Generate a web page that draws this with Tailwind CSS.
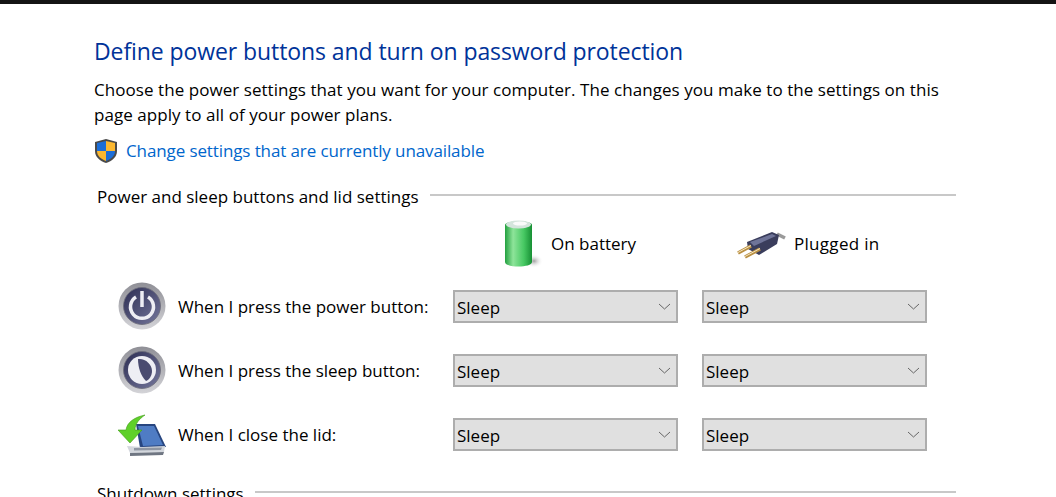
<!DOCTYPE html>
<html lang="en">
<head>
  <meta charset="UTF-8" />
  <title>Power Options</title>
  <script src="https://cdn.jsdelivr.net/npm/@tailwindcss/browser@4"></script>
</head>
<body class="h-[497px] w-[1056px] overflow-hidden bg-white font-['Open_Sans',sans-serif] text-[17px] text-black">

  <!-- top edge -->
  <div class="h-1 bg-[#141414]"></div>

  <main class="pl-[94px] pr-[100px]">
    <h1 class="mt-[30px] h-[34px] text-[23px] leading-[34px] tracking-[-0.085px] text-[#003399]">Define power buttons and turn on password protection</h1>
    <p class="mt-[9px] w-[860px] text-[17px] leading-[25px] tracking-[0.055px]">Choose the power settings that you want for your computer. The changes you make to the settings on this page apply to all of your power plans.</p>

    <a href="#" class="mt-[11px] flex h-[26px] items-center gap-[8px] tracking-[-0.11px] text-[#0066cc]">
      <svg width="24" height="26" viewBox="0 0 24 26">
        <path d="M12 1 L23 4 V13 C23 19 18 23 12 25 C6 23 1 19 1 13 V4 Z" fill="#4a4a4a"/>
        <path d="M12 3 V13 H3 V5 Z" fill="#1c6ed8"/>
        <path d="M12 3 L21 5 V13 H12 Z" fill="#fcb830"/>
        <path d="M3 13 H12 V23 C7 21 3 18 3 13 Z" fill="#fcb830"/>
        <path d="M12 13 H21 C21 18 17 21 12 23 Z" fill="#1c6ed8"/>
      </svg>
      Change settings that are currently unavailable
    </a>

    <!-- buttons and lid -->
    <section class="mt-[20px]">
      <div class="flex h-[26px] items-center gap-[11px] pl-[3px]">
        <h2 class="font-normal">Power and sleep buttons and lid settings</h2>
        <div class="mb-[4px] h-[2px] flex-1 bg-[#c8c8c8]"></div>
      </div>

      <div class="mt-[8px] grid grid-cols-[335px_225px_225px] gap-x-[24px]">
        <div></div>
        <div class="flex h-[52px] items-center">
          <svg class="ml-[47px]" width="48" height="52" viewBox="0 0 48 52">
            <defs>
              <linearGradient id="cell" x1="0" x2="1" y1="0" y2="0">
                <stop offset="0" stop-color="#23a03f"/>
                <stop offset="0.3" stop-color="#8ee49a"/>
                <stop offset="0.7" stop-color="#46c862"/>
                <stop offset="1" stop-color="#178f34"/>
              </linearGradient>
              <radialGradient id="blur"><stop offset="0" stop-color="#888" stop-opacity=".8"/><stop offset="1" stop-color="#fff" stop-opacity="0"/></radialGradient>
            </defs>
            <ellipse cx="34" cy="43" rx="9" ry="7" fill="url(#blur)"/>
            <path d="M5 7 C5 2 32 2 32 7 V44 C32 50 5 50 5 44 Z" fill="url(#cell)"/>
            <ellipse cx="18.500" cy="6.500" rx="12.500" ry="4" fill="#d4e4dc"/>
            <ellipse cx="20" cy="5.500" rx="7" ry="2" fill="#fafafa"/>
          </svg>
          <span class="ml-[3px]">On battery</span>
        </div>
        <div class="flex h-[52px] items-center">
          <svg class="ml-[35px]" width="50" height="30" viewBox="0 0 50 30">
            <path d="M40 5 L48 9" stroke="#9a9a9a" stroke-width="3.500"/>
            <path d="M10 13 L35 3 L42 6 L40 15 L22 26 L11 20 Z" fill="#3a3d5c"/>
            <path d="M13 13 L35 5 L39 7 L17 17 Z" fill="#6f7498"/>
            <path d="M1 24 L14 17" stroke="#b98f42" stroke-width="3.500"/>
            <path d="M8 28 L23 20" stroke="#b98f42" stroke-width="3.500"/>
            <path d="M1 23.500 L14 16.500" stroke="#f6e6c0" stroke-width="1"/>
            <path d="M8 27.500 L23 19.500" stroke="#f6e6c0" stroke-width="1"/>
          </svg>
          <span class="ml-[7px] tracking-[0.3px]">Plugged in</span>
        </div>
      </div>

      <div class="mt-[20px] grid grid-cols-[335px_225px_225px] gap-x-[24px] gap-y-[31px]">
        <!-- power button -->
        <div class="flex h-[33px] items-center pl-[24px]">
          <svg class="my-[-10px] mt-[-11px] shrink-0" width="48" height="48" viewBox="0 0 48 48">
            <defs>
              <linearGradient id="ring" x1="0" x2="0" y1="0" y2="1"><stop offset="0" stop-color="#8f8f96"/><stop offset="1" stop-color="#d4d4d8"/></linearGradient>
              <linearGradient id="face" x1="0" x2="1" y1="0" y2="1"><stop offset="0" stop-color="#2c2d52"/><stop offset="1" stop-color="#75779c"/></linearGradient>
            </defs>
            <circle cx="24" cy="24" r="23.500" fill="url(#ring)"/>
            <circle cx="24" cy="24" r="18.500" fill="url(#face)" stroke="#6b6b78" stroke-width=".8"/>
            <path d="M18 15 A11.500 11.500 0 1 0 30 15" fill="none" stroke="#eeeef4" stroke-width="3.500"/>
            <path d="M24 9 V25" stroke="#eeeef4" stroke-width="3.500"/>
          </svg>
          <span class="ml-[12px]">When I press the power button:</span>
        </div>
        <div class="relative"><select class="h-[33px] w-full appearance-none border-2 border-[#adadad] bg-[#e0e0e0] pl-[2px] pt-[3px]"><option>Sleep</option></select><svg class="absolute right-[7px] top-[13px]" width="13" height="7" viewBox="0 0 13 7"><path d="M1 1 L6.500 6 L12 1" fill="none" stroke="#666" stroke-width="1"/></svg></div>
        <div class="relative"><select class="h-[33px] w-full appearance-none border-2 border-[#adadad] bg-[#e0e0e0] pl-[2px] pt-[3px]"><option>Sleep</option></select><svg class="absolute right-[7px] top-[13px]" width="13" height="7" viewBox="0 0 13 7"><path d="M1 1 L6.500 6 L12 1" fill="none" stroke="#666" stroke-width="1"/></svg></div>

        <!-- sleep button -->
        <div class="flex h-[33px] items-center pl-[24px]">
          <svg class="my-[-10px] mt-[-11px] shrink-0" width="48" height="48" viewBox="0 0 48 48">
            <circle cx="24" cy="24" r="23.500" fill="url(#ring)"/>
            <circle cx="24" cy="24" r="18.500" fill="url(#face)" stroke="#6b6b78" stroke-width=".8"/>
            <circle cx="24" cy="24" r="14" fill="#eeeef4"/>
            <path d="M20 13 C27 12 34 18 34 25 C34 30 31 34 28 35 C23 30 20 22 20 13 Z" fill="#4a4b70"/>
          </svg>
          <span class="ml-[12px]">When I press the sleep button:</span>
        </div>
        <div class="relative"><select class="h-[33px] w-full appearance-none border-2 border-[#adadad] bg-[#e0e0e0] pl-[2px] pt-[3px]"><option>Sleep</option></select><svg class="absolute right-[7px] top-[13px]" width="13" height="7" viewBox="0 0 13 7"><path d="M1 1 L6.500 6 L12 1" fill="none" stroke="#666" stroke-width="1"/></svg></div>
        <div class="relative"><select class="h-[33px] w-full appearance-none border-2 border-[#adadad] bg-[#e0e0e0] pl-[2px] pt-[3px]"><option>Sleep</option></select><svg class="absolute right-[7px] top-[13px]" width="13" height="7" viewBox="0 0 13 7"><path d="M1 1 L6.500 6 L12 1" fill="none" stroke="#666" stroke-width="1"/></svg></div>

        <!-- lid -->
        <div class="flex h-[33px] items-center pl-[24px]">
          <svg class="my-[-10px] shrink-0" width="48" height="46" viewBox="0 0 48 46">
            <path d="M18 12 L37 12 L48 35 L22 36 Z" fill="#27457f"/>
            <path d="M20 14 L36 14 L45 33 L25 34 Z" fill="#4f7cc4"/>
            <path d="M9 34 L24 35 L47 34 L46 40 L12 41 Z" fill="#d3d7dd"/>
            <path d="M16 36 L44 35.500 L43 38 L16 38.500 Z" fill="#8f96a3"/>
            <path d="M12 41 L46 40 L45 43 L12 44 Z" fill="#6f7682"/>
            <path d="M27 3 C17 5 9 10 8 18 L0 18 L12 31 L24 18 L17 18 C17 12 21 7 27 3 Z" fill="#5fd02a" stroke="#3f9a18" stroke-width=".6"/>
          </svg>
          <span class="ml-[12px]">When I close the lid:</span>
        </div>
        <div class="relative"><select class="h-[33px] w-full appearance-none border-2 border-[#adadad] bg-[#e0e0e0] pl-[2px] pt-[3px]"><option>Sleep</option></select><svg class="absolute right-[7px] top-[13px]" width="13" height="7" viewBox="0 0 13 7"><path d="M1 1 L6.500 6 L12 1" fill="none" stroke="#666" stroke-width="1"/></svg></div>
        <div class="relative"><select class="h-[33px] w-full appearance-none border-2 border-[#adadad] bg-[#e0e0e0] pl-[2px] pt-[3px]"><option>Sleep</option></select><svg class="absolute right-[7px] top-[13px]" width="13" height="7" viewBox="0 0 13 7"><path d="M1 1 L6.500 6 L12 1" fill="none" stroke="#666" stroke-width="1"/></svg></div>
      </div>
    </section>

    <!-- shutdown -->
    <section class="mt-[30px]">
      <div class="flex h-[26px] items-center gap-[11px] pl-[3px]">
        <h2 class="font-normal">Shutdown settings</h2>
        <div class="mb-[4px] h-[2px] flex-1 bg-[#c8c8c8]"></div>
      </div>
    </section>
  </main>
</body>
</html>
